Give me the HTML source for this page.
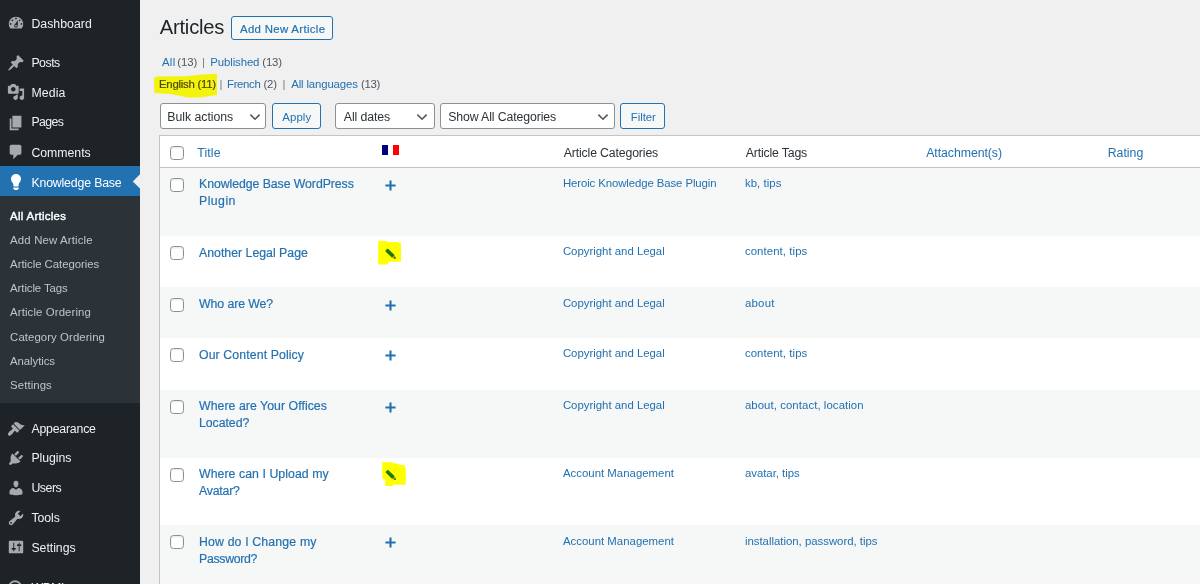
<!DOCTYPE html>
<html lang="en">
<head>
<meta charset="utf-8">
<title>Articles</title>
<style>

html,body{margin:0;padding:0}
body{width:1200px;height:584px;overflow:hidden;background:#f0f0f1;position:relative;font-family:"Liberation Sans", Arial, sans-serif;}
.t{position:absolute;white-space:nowrap;line-height:20px;height:20px;display:block;text-decoration:none;margin:0;font-weight:normal}
.abs{position:absolute}
#txt{position:absolute;left:0;top:0;width:1200px;height:584px;will-change:transform;filter:blur(0.35px)}
#side{position:absolute;left:0;top:0;width:140px;height:584px;background:#1d2327}
#sub{position:absolute;left:0;top:196px;width:140px;height:207px;background:#2c3338}
#cur{position:absolute;left:0;top:166px;width:140px;height:30px;background:#2271b1}
.ic{position:absolute;left:6.75px;width:18.0px;height:18.0px}
.btn{position:absolute;box-sizing:border-box;border:1px solid #2271b1;border-radius:3px;background:#f6f7f7}
.sel{position:absolute;box-sizing:border-box;border:1px solid #8c8f94;border-radius:3px;background:#fff}
.cb{position:absolute;box-sizing:border-box;left:169.9px;width:14px;height:14px;border:1px solid #8c8f94;border-radius:3.5px;background:#fff;box-shadow:inset 0 1px 2px rgba(0,0,0,.1)}
#tbl{position:absolute;left:159px;top:134.8px;width:1100px;height:520px;box-sizing:border-box;border:1px solid #c3c4c7;background:#fff}
.row{position:absolute;left:160px;width:1040px}
.alt{background:#f6f7f7}

</style>
</head>
<body>
<div id="side"><div id="cur"></div><div id="sub"></div><svg class="abs" style="left:130px;top:170px" width="10" height="24" viewBox="130 170 10 24"><path d="M140 174.3 L132.8 181.4 L140 188.5 Z" fill="#f0f0f1"/></svg>
<svg class="ic" style="top:14.40px" viewBox="0 0 20 20"><path fill="#a7aaad" d="M3.76 16h12.48c1.1-1.37 1.76-3.11 1.76-5 0-4.42-3.58-8-8-8s-8 3.58-8 8c0 1.89.66 3.63 1.76 5zM10 4c.55 0 1 .45 1 1s-.45 1-1 1-1-.45-1-1 .45-1 1-1zM6 6c.55 0 1 .45 1 1s-.45 1-1 1-1-.45-1-1 .45-1 1-1zm8 0c.55 0 1 .45 1 1s-.45 1-1 1-1-.45-1-1 .45-1 1-1zm-5.37 5.55L12 7v6c0 1.1-.9 2-2 2s-2-.9-2-2c0-.57.24-1.08.63-1.45zM4 10c.55 0 1 .45 1 1s-.45 1-1 1-1-.45-1-1 .45-1 1-1zm12 0c.55 0 1 .45 1 1s-.45 1-1 1-1-.45-1-1 .45-1 1-1zm-5 3c0-.55-.45-1-1-1s-1 .45-1 1 .45 1 1 1 1-.45 1-1z"/></svg>
<svg class="ic" style="top:53.60px" viewBox="0 0 20 20"><path fill="#a7aaad" d="M10.44 3.02l1.82-1.82 6.36 6.35-1.83 1.82c-1.05-.68-2.48-.57-3.41.36l-.75.75c-.92.93-1.04 2.35-.35 3.41l-1.83 1.82-2.41-2.41-2.8 2.79c-.42.42-3.38 2.71-3.8 2.29s1.860-3.390 2.280-3.810l2.790-2.790L4.100 9.360l1.830-1.820c1.050.690 2.480.570 3.400-.360l.750-.750c.930-.920 1.050-2.350.360-3.410z"/></svg>
<svg class="ic" style="top:83.35px" viewBox="0 0 20 20"><path fill="#a7aaad" d="M13 11V4c0-.55-.45-1-1-1h-1.670L9 1H5L3.670 3H2c-.550 0-1 .450-1 1v7c0 .550.450 1 1 1h10c.550 0 1-.450 1-1zM7 4.500c1.380 0 2.500 1.120 2.500 2.500S8.380 9.500 7 9.500 4.500 8.380 4.500 7 5.620 4.500 7 4.500zM14 6h5v10.500c0 1.380-1.120 2.500-2.500 2.500S14 17.880 14 16.500s1.120-2.500 2.500-2.500c.170 0 .340.020.500.050V9h-3V6zm-4 8.050V13h2v3.500c0 1.380-1.120 2.500-2.500 2.500S7 17.880 7 16.500 8.120 14 9.500 14c.170 0 .340.020.500.050z"/></svg>
<svg class="ic" style="top:113.50px" viewBox="0 0 20 20"><path fill="#a7aaad" d="M6 15V2h10v13H6zm-1 1h8v2H3V5h2v11z"/></svg>
<svg class="ic" style="top:142.85px" viewBox="0 0 20 20"><path fill="#a7aaad" d="M5 2h9c1.100 0 2 .900 2 2v7c0 1.100-.900 2-2 2h-2l-5 5v-5H5c-1.100 0-2-.900-2-2V4c0-1.100.900-2 2-2z"/></svg>
<svg class="ic" style="top:172.50px" viewBox="0 0 20 20"><path fill="#ffffff" d="M10 1c3.110 0 5.630 2.520 5.630 5.620 0 1.840-2.030 4.580-2.030 4.580-.330.440-.600 1.250-.600 1.800v1c0 .550-.450.990-1 .990H8c-.550 0-1-.440-1-.990v-1c0-.550-.270-1.360-.600-1.800 0 0-2.020-2.740-2.020-4.580C4.380 3.520 6.890 1 10 1zM7 16.870V16h6v.870c0 .620-.130 1.130-.750 1.130H12c0 .620-.400 1-1.020 1h-2c-.610 0-.980-.380-.980-1h-.250c-.620 0-.750-.510-.750-1.130z"/></svg>
<svg class="ic" style="top:419.70px" viewBox="0 0 20 20"><path fill="#a7aaad" d="M14.480 11.060L7.410 3.990l1.500-1.500c.500-.560 2.300-.470 3.510.320 1.210.800 1.430 1.280 2.910 2.100 1.180.640 2.450 1.260 4.450.850zm-.710.710L6.700 4.700 4.930 6.470c-.390.390-.390 1.020 0 1.410l1.060 1.060c.390.390.390 1.030 0 1.420-.600.600-1.430 1.110-2.210 1.690-.350.260-.700.530-1.010.840C1.430 14.230.400 16.080 1.400 17.070c.990 1 2.840-.030 4.180-1.360.310-.310.580-.660.850-1.020.570-.780 1.080-1.610 1.690-2.210.390-.390 1.020-.390 1.410 0l1.060 1.060c.390.390 1.020.390 1.410 0z"/></svg>
<svg class="ic" style="top:449.45px" viewBox="0 0 20 20"><path fill="#a7aaad" d="M13.110 4.360L9.870 7.600 8 5.730l3.240-3.240c.350-.340 1.050-.200 1.560.320.520.510.660 1.210.310 1.550zm-8 1.770l.910-1.120 9.010 9.010-1.190.840c-.710.710-2.630 1.160-3.820 1.160H6.140L4.900 17.260c-.590.590-1.540.590-2.120 0-.590-.580-.590-1.530 0-2.120l1.240-1.240v-3.880c0-1.130.400-3.190 1.090-3.890zm7.260 3.970l3.240-3.240c.340-.350 1.040-.210 1.550.310.520.510.660 1.210.310 1.550l-3.240 3.250z"/></svg>
<svg class="ic" style="top:479.20px" viewBox="0 0 20 20"><path fill="#a7aaad" d="M10 9.250c-2.270 0-2.730-3.440-2.730-3.440C7 4.020 7.820 2 9.970 2c2.160 0 2.980 2.020 2.710 3.810 0 0-.410 3.440-2.680 3.440zm0 2.570L12.720 10c2.390 0 4.520 2.330 4.520 4.530v2.490s-3.650 1.130-7.240 1.130c-3.650 0-7.240-1.130-7.240-1.130v-2.490c0-2.250 1.940-4.480 4.470-4.480z"/></svg>
<svg class="ic" style="top:508.95px" viewBox="0 0 20 20"><path fill="#a7aaad" d="M16.680 9.770c-1.340 1.340-3.300 1.670-4.950.990l-5.410 6.520c-.990.990-2.590.990-3.580 0s-.990-2.590 0-3.570l6.520-5.420c-.680-1.650-.350-3.610.990-4.950 1.280-1.280 3.120-1.620 4.720-1.060l-2.890 2.890 2.820 2.820 2.890-2.890c.550 1.600.210 3.440-1.110 4.670zM3.810 16.210c.400.390 1.040.390 1.430 0 .400-.400.400-1.040 0-1.430-.390-.400-1.030-.400-1.430 0-.390.390-.390 1.030 0 1.430z"/></svg>
<svg class="ic" style="top:537.90px" viewBox="0 0 20 20"><path fill="#a7aaad" d="M18 16V4c0-.550-.450-1-1-1H3c-.550 0-1 .450-1 1v12c0 .550.450 1 1 1h14c.550 0 1-.450 1-1zM8 11h1c.550 0 1 .450 1 1s-.450 1-1 1H8v1.500c0 .280-.220.500-.500.500s-.500-.220-.500-.500V13H6c-.550 0-1-.450-1-1s.450-1 1-1h1V5.500c0-.280.220-.500.500-.500s.500.220.500.500V11zm5-2h-1c-.550 0-1-.450-1-1s.450-1 1-1h1V5.500c0-.280.220-.500.500-.500s.500.220.500.500V7h1c.550 0 1 .450 1 1s-.450 1-1 1h-1v5.500c0 .280-.220.500-.500.500s-.500-.220-.500-.500V9z"/></svg>
<svg class="ic" style="top:579.20px" viewBox="0 0 20 20"><circle cx="9" cy="9" r="6.5" fill="none" stroke="#a7aaad" stroke-width="2"/></svg>
</div>
<div id="tbl"></div>
<div class="abs" style="left:160px;top:167.1px;width:1040px;height:1px;background:#c3c4c7"></div>
<div class="row alt" style="top:168.0px;height:68.0px"></div>
<div class="row" style="top:236.0px;height:51.4px"></div>
<div class="row alt" style="top:287.4px;height:50.6px"></div>
<div class="row" style="top:338.0px;height:51.6px"></div>
<div class="row alt" style="top:389.6px;height:68.0px"></div>
<div class="row" style="top:457.6px;height:66.9px"></div>
<div class="row alt" style="top:524.5px;height:67.5px"></div>
<div class="btn" style="left:231.2px;top:15.5px;width:101.6px;height:24.2px"></div>
<svg class="abs" style="left:0;top:0" width="1200" height="584" viewBox="0 0 1200 584"><path fill="#f3f30c" d="M153.85 78.1 L157 76.6 L187 76.25 L199 74.75 L217 73.85 L217 95 L200.5 97.6 L187 97.6 L181 96.1 L169.75 93.9 L154.4 92.9 Z"/><path fill="#ffff00" d="M378.2 240.9 H387.1 V241.9 H397.9 V242.85 H401 V261.75 H388.1 V264.5 H378.2 Z"/><path fill="#ffff00" d="M382.2 462.3 H392.9 V463.2 H395.9 L398.1 464.1 L400.3 465.1 H403.6 L405.8 467.9 V484.85 H392.9 V485.9 H385.2 V479.1 H383.3 L382.2 477.7 Z"/><g transform="translate(390.9 254.1) rotate(44)"><rect x="-6.3" y="-1.8" width="9.8" height="3.6" rx="0.9" fill="#1d7a08"/><path d="M3.5 -1.8 L6.9 0 L3.5 1.8 Z" fill="#c8901a"/><path d="M4.7 -1.15 L6.9 0 L4.7 1.15 Z" fill="#1d6408"/></g><g transform="translate(391.1 475.3) rotate(44)"><rect x="-6.3" y="-1.8" width="9.8" height="3.6" rx="0.9" fill="#1d7a08"/><path d="M3.5 -1.8 L6.9 0 L3.5 1.8 Z" fill="#c8901a"/><path d="M4.7 -1.15 L6.9 0 L4.7 1.15 Z" fill="#1d6408"/></g></svg>
<div class="sel" style="left:160.3px;top:103px;width:105.9px;height:26.2px"></div>
<div class="btn" style="left:272px;top:103px;width:48.8px;height:26.2px"></div>
<div class="sel" style="left:335.3px;top:103px;width:99.4px;height:26.2px"></div>
<div class="sel" style="left:440.3px;top:103px;width:175.2px;height:26.2px"></div>
<div class="btn" style="left:620.3px;top:103px;width:44.7px;height:26.2px"></div>
<svg class="abs" style="left:249.0px;top:111px" width="12" height="12" viewBox="0 0 12 12"><path d="M1.4 3.6 L6 8.2 L10.6 3.6" fill="none" stroke="#50575e" stroke-width="1.6"/></svg>
<svg class="abs" style="left:416.1px;top:111px" width="12" height="12" viewBox="0 0 12 12"><path d="M1.4 3.6 L6 8.2 L10.6 3.6" fill="none" stroke="#50575e" stroke-width="1.6"/></svg>
<svg class="abs" style="left:597.0px;top:111px" width="12" height="12" viewBox="0 0 12 12"><path d="M1.4 3.6 L6 8.2 L10.6 3.6" fill="none" stroke="#50575e" stroke-width="1.6"/></svg>
<div class="abs" style="left:382.2px;top:144.8px;width:16.4px;height:10.7px;background:linear-gradient(90deg,#00007a 0,#00007a 33.3%,#fff 33.3%,#fff 66.6%,#f00 66.6%,#f00 100%)"></div>
<div class="cb" style="top:145.7px"></div>
<div class="cb" style="top:178.3px"></div>
<svg class="abs" style="left:384px;top:179.3px" width="13" height="13" viewBox="0 0 13 13"><path d="M6.5 1.4 V11.6 M1.4 6.5 H11.6" stroke="#2271b1" stroke-width="2.1" fill="none"/></svg>
<div class="cb" style="top:246.3px"></div>
<div class="cb" style="top:297.7px"></div>
<svg class="abs" style="left:384px;top:298.7px" width="13" height="13" viewBox="0 0 13 13"><path d="M6.5 1.4 V11.6 M1.4 6.5 H11.6" stroke="#2271b1" stroke-width="2.1" fill="none"/></svg>
<div class="cb" style="top:348.3px"></div>
<svg class="abs" style="left:384px;top:349.3px" width="13" height="13" viewBox="0 0 13 13"><path d="M6.5 1.4 V11.6 M1.4 6.5 H11.6" stroke="#2271b1" stroke-width="2.1" fill="none"/></svg>
<div class="cb" style="top:399.9px"></div>
<svg class="abs" style="left:384px;top:400.9px" width="13" height="13" viewBox="0 0 13 13"><path d="M6.5 1.4 V11.6 M1.4 6.5 H11.6" stroke="#2271b1" stroke-width="2.1" fill="none"/></svg>
<div class="cb" style="top:467.9px"></div>
<div class="cb" style="top:534.8px"></div>
<svg class="abs" style="left:384px;top:535.8px" width="13" height="13" viewBox="0 0 13 13"><path d="M6.5 1.4 V11.6 M1.4 6.5 H11.6" stroke="#2271b1" stroke-width="2.1" fill="none"/></svg>
<div id="txt">
<a class="t" style="left:31.40px;top:14px;font-size:12.3px;color:#f0f0f1;letter-spacing:0.029px;">Dashboard</a>
<a class="t" style="left:31.40px;top:53px;font-size:12.3px;color:#f0f0f1;letter-spacing:-0.478px;">Posts</a>
<a class="t" style="left:31.40px;top:83px;font-size:12.3px;color:#f0f0f1;letter-spacing:0.127px;">Media</a>
<a class="t" style="left:31.40px;top:112px;font-size:12.3px;color:#f0f0f1;letter-spacing:-0.605px;">Pages</a>
<a class="t" style="left:31.40px;top:143px;font-size:12.3px;color:#f0f0f1;letter-spacing:-0.019px;">Comments</a>
<a class="t" style="left:31.40px;top:173px;font-size:12.3px;color:#ffffff;letter-spacing:-0.153px;">Knowledge Base</a>
<a class="t" style="left:31.40px;top:419px;font-size:12.3px;color:#f0f0f1;letter-spacing:-0.195px;">Appearance</a>
<a class="t" style="left:31.40px;top:448px;font-size:12.3px;color:#f0f0f1;letter-spacing:-0.048px;">Plugins</a>
<a class="t" style="left:31.40px;top:478px;font-size:12.3px;color:#f0f0f1;letter-spacing:-0.458px;">Users</a>
<a class="t" style="left:31.40px;top:508px;font-size:12.3px;color:#f0f0f1;letter-spacing:-0.075px;">Tools</a>
<a class="t" style="left:31.40px;top:538px;font-size:12.3px;color:#f0f0f1;letter-spacing:-0.026px;">Settings</a>
<a class="t" style="left:31.40px;top:578px;font-size:12.3px;color:#f0f0f1;letter-spacing:-0.148px;">WPML</a>
<a class="t" style="left:10.10px;top:206px;font-size:11.4px;color:#ffffff;letter-spacing:0.299px;-webkit-text-stroke:0.4px currentColor;">All Articles</a>
<a class="t" style="left:10.10px;top:230px;font-size:11.4px;color:#c0c4c8;letter-spacing:0.152px;">Add New Article</a>
<a class="t" style="left:10.10px;top:254px;font-size:11.4px;color:#c0c4c8;letter-spacing:-0.042px;">Article Categories</a>
<a class="t" style="left:10.10px;top:278px;font-size:11.4px;color:#c0c4c8;letter-spacing:-0.090px;">Article Tags</a>
<a class="t" style="left:10.10px;top:302px;font-size:11.4px;color:#c0c4c8;letter-spacing:0.108px;">Article Ordering</a>
<a class="t" style="left:10.10px;top:327px;font-size:11.4px;color:#c0c4c8;letter-spacing:0.069px;">Category Ordering</a>
<a class="t" style="left:10.10px;top:351px;font-size:11.4px;color:#c0c4c8;letter-spacing:-0.082px;">Analytics</a>
<a class="t" style="left:10.10px;top:375px;font-size:11.4px;color:#c0c4c8;letter-spacing:0.073px;">Settings</a>
<h1 class="t" style="left:159.66px;top:17px;font-size:20.2px;color:#1d2327;letter-spacing:-0.203px;">Articles</h1>
<a class="t" style="left:239.98px;top:19px;font-size:11.4px;color:#2271b1;letter-spacing:0.330px;-webkit-text-stroke:0.18px currentColor;">Add New Article</a>
<a class="t" style="left:161.98px;top:52px;font-size:11.4px;color:#2271b1;letter-spacing:0.306px;">All</a>
<span class="t" style="left:177.29px;top:52px;font-size:11.4px;color:#50575e;letter-spacing:-0.051px;">(13)</span>
<span class="t" style="left:201.88px;top:52px;font-size:11.4px;color:#787c82;">|</span>
<a class="t" style="left:210.36px;top:52px;font-size:11.4px;color:#2271b1;letter-spacing:-0.120px;">Published</a>
<span class="t" style="left:262.29px;top:52px;font-size:11.4px;color:#50575e;letter-spacing:-0.184px;">(13)</span>
<span class="t" style="left:159.06px;top:74px;font-size:11.4px;color:#4c480a;letter-spacing:-0.272px;-webkit-text-stroke:0.2px currentColor;">English (11)</span>
<span class="t" style="left:219.38px;top:74px;font-size:11.4px;color:#787c82;">|</span>
<a class="t" style="left:227.06px;top:74px;font-size:11.4px;color:#2271b1;letter-spacing:-0.356px;">French</a>
<span class="t" style="left:263.49px;top:74px;font-size:11.4px;color:#50575e;letter-spacing:-0.204px;">(2)</span>
<span class="t" style="left:282.38px;top:74px;font-size:11.4px;color:#787c82;">|</span>
<a class="t" style="left:291.18px;top:74px;font-size:11.4px;color:#2271b1;letter-spacing:-0.139px;">All languages</a>
<span class="t" style="left:360.99px;top:74px;font-size:11.4px;color:#50575e;letter-spacing:-0.284px;">(13)</span>
<span class="t" style="left:167.29px;top:107px;font-size:12.3px;color:#2c3338;letter-spacing:-0.033px;">Bulk actions</span>
<a class="t" style="left:282.18px;top:107px;font-size:11.4px;color:#2271b1;letter-spacing:0.136px;">Apply</a>
<span class="t" style="left:343.78px;top:107px;font-size:12.3px;color:#2c3338;letter-spacing:-0.088px;">All dates</span>
<span class="t" style="left:448.14px;top:107px;font-size:12.3px;color:#2c3338;letter-spacing:-0.114px;">Show All Categories</span>
<a class="t" style="left:630.76px;top:107px;font-size:11.4px;color:#2271b1;letter-spacing:-0.038px;">Filter</a>
<a class="t" style="left:197.22px;top:143px;font-size:12.3px;color:#2271b1;letter-spacing:0.135px;">Title</a>
<span class="t" style="left:563.78px;top:143px;font-size:12.3px;color:#2c3338;letter-spacing:-0.153px;">Article Categories</span>
<span class="t" style="left:745.78px;top:143px;font-size:12.3px;color:#2c3338;letter-spacing:-0.170px;">Article Tags</span>
<a class="t" style="left:926.23px;top:143px;font-size:12.3px;color:#2271b1;letter-spacing:-0.063px;">Attachment(s)</a>
<a class="t" style="left:1107.74px;top:143px;font-size:12.3px;color:#2271b1;">Rating</a>
<a class="t" style="left:199.00px;top:174px;font-size:12.3px;color:#2271b1;letter-spacing:-0.063px;-webkit-text-stroke:0.18px currentColor;">Knowledge Base WordPress</a>
<a class="t" style="left:199.00px;top:191px;font-size:12.3px;color:#2271b1;letter-spacing:0.450px;-webkit-text-stroke:0.18px currentColor;">Plugin</a>
<a class="t" style="left:562.90px;top:173px;font-size:11.4px;color:#2271b1;letter-spacing:-0.101px;">Heroic Knowledge Base Plugin</a>
<a class="t" style="left:744.90px;top:173px;font-size:11.4px;color:#2271b1;letter-spacing:0.069px;">kb, tips</a>
<a class="t" style="left:199.00px;top:243px;font-size:12.3px;color:#2271b1;letter-spacing:0.009px;-webkit-text-stroke:0.18px currentColor;">Another Legal Page</a>
<a class="t" style="left:562.90px;top:241px;font-size:11.4px;color:#2271b1;letter-spacing:-0.007px;">Copyright and Legal</a>
<a class="t" style="left:744.90px;top:241px;font-size:11.4px;color:#2271b1;letter-spacing:0.081px;">content, tips</a>
<a class="t" style="left:199.00px;top:294px;font-size:12.3px;color:#2271b1;letter-spacing:-0.074px;-webkit-text-stroke:0.18px currentColor;">Who are We?</a>
<a class="t" style="left:562.90px;top:293px;font-size:11.4px;color:#2271b1;letter-spacing:-0.007px;">Copyright and Legal</a>
<a class="t" style="left:744.90px;top:293px;font-size:11.4px;color:#2271b1;letter-spacing:0.263px;">about</a>
<a class="t" style="left:199.00px;top:345px;font-size:12.3px;color:#2271b1;letter-spacing:0.106px;-webkit-text-stroke:0.18px currentColor;">Our Content Policy</a>
<a class="t" style="left:562.90px;top:343px;font-size:11.4px;color:#2271b1;letter-spacing:-0.007px;">Copyright and Legal</a>
<a class="t" style="left:744.90px;top:343px;font-size:11.4px;color:#2271b1;letter-spacing:0.081px;">content, tips</a>
<a class="t" style="left:199.00px;top:396px;font-size:12.3px;color:#2271b1;letter-spacing:0.047px;-webkit-text-stroke:0.18px currentColor;">Where are Your Offices</a>
<a class="t" style="left:199.00px;top:413px;font-size:12.3px;color:#2271b1;letter-spacing:-0.049px;-webkit-text-stroke:0.18px currentColor;">Located?</a>
<a class="t" style="left:562.90px;top:395px;font-size:11.4px;color:#2271b1;letter-spacing:-0.007px;">Copyright and Legal</a>
<a class="t" style="left:744.90px;top:395px;font-size:11.4px;color:#2271b1;letter-spacing:0.068px;">about, contact, location</a>
<a class="t" style="left:199.00px;top:464px;font-size:12.3px;color:#2271b1;letter-spacing:0.059px;-webkit-text-stroke:0.18px currentColor;">Where can I Upload my</a>
<a class="t" style="left:199.00px;top:481px;font-size:12.3px;color:#2271b1;letter-spacing:-0.199px;-webkit-text-stroke:0.18px currentColor;">Avatar?</a>
<a class="t" style="left:562.90px;top:463px;font-size:11.4px;color:#2271b1;letter-spacing:0.017px;">Account Management</a>
<a class="t" style="left:744.90px;top:463px;font-size:11.4px;color:#2271b1;letter-spacing:-0.018px;">avatar, tips</a>
<a class="t" style="left:199.00px;top:532px;font-size:12.3px;color:#2271b1;letter-spacing:0.153px;-webkit-text-stroke:0.18px currentColor;">How do I Change my</a>
<a class="t" style="left:199.00px;top:549px;font-size:12.3px;color:#2271b1;letter-spacing:-0.297px;-webkit-text-stroke:0.18px currentColor;">Password?</a>
<a class="t" style="left:562.90px;top:531px;font-size:11.4px;color:#2271b1;letter-spacing:0.017px;">Account Management</a>
<a class="t" style="left:744.90px;top:531px;font-size:11.4px;color:#2271b1;letter-spacing:-0.011px;">installation, password, tips</a>
</div>
</body>
</html>
